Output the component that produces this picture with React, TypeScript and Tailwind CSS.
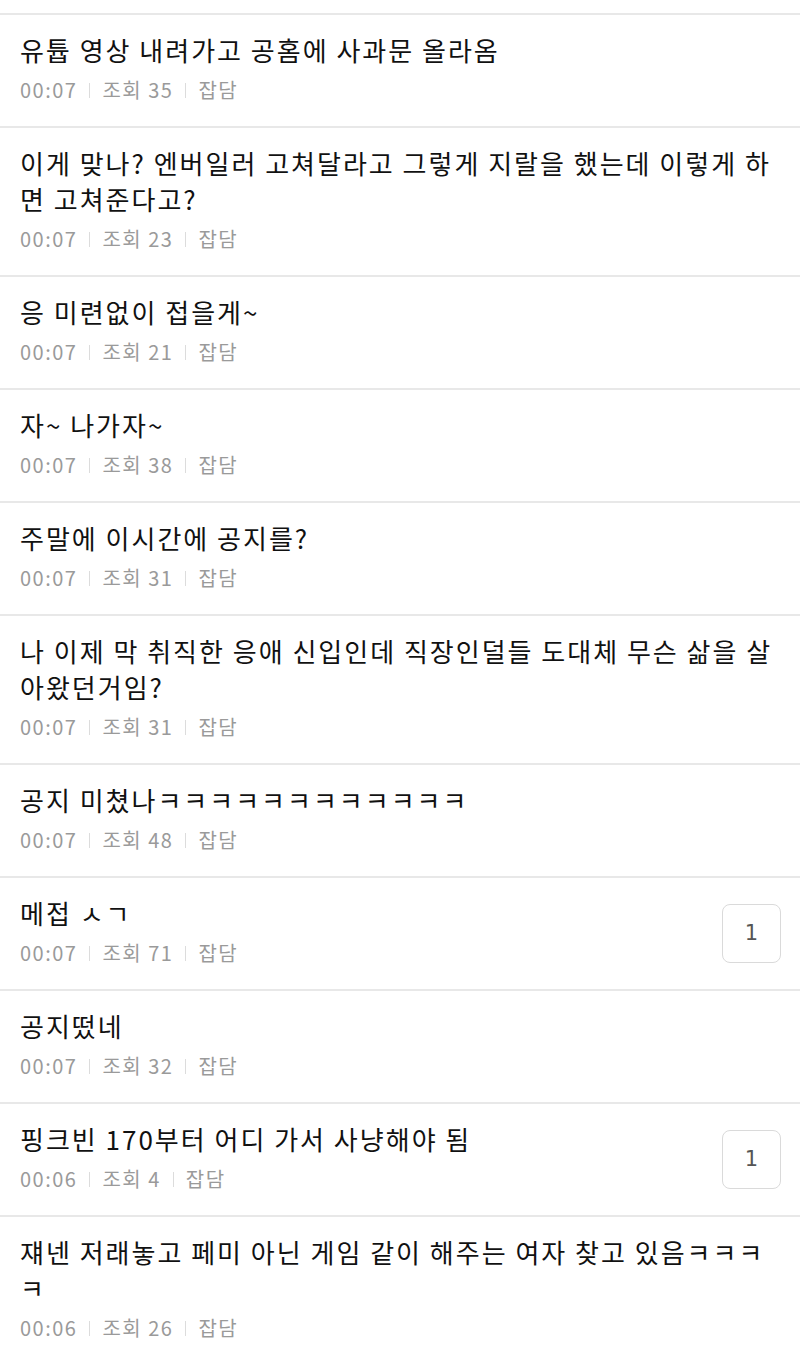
import React from "react";

type Post = { title: string; time: string; views: number; cat: string; comments?: number };

const posts: Post[] = [
  { title: "유튭 영상 내려가고 공홈에 사과문 올라옴", time: "00:07", views: 35, cat: "잡담" },
  { title: "이게 맞나? 엔버일러 고쳐달라고 그렇게 지랄을 했는데 이렇게 하면 고쳐준다고?", time: "00:07", views: 23, cat: "잡담" },
  { title: "응 미련없이 접을게~", time: "00:07", views: 21, cat: "잡담" },
  { title: "자~ 나가자~", time: "00:07", views: 38, cat: "잡담" },
  { title: "주말에 이시간에 공지를?", time: "00:07", views: 31, cat: "잡담" },
  { title: "나 이제 막 취직한 응애 신입인데 직장인덜들 도대체 무슨 삶을 살아왔던거임?", time: "00:07", views: 31, cat: "잡담" },
  { title: "공지 미쳤나ㅋㅋㅋㅋㅋㅋㅋㅋㅋㅋㅋㅋ", time: "00:07", views: 48, cat: "잡담" },
  { title: "메접 ㅅㄱ", time: "00:07", views: 71, cat: "잡담", comments: 1 },
  { title: "공지떴네", time: "00:07", views: 32, cat: "잡담" },
  { title: "핑크빈 170부터 어디 가서 사냥해야 됨", time: "00:06", views: 4, cat: "잡담", comments: 1 },
  { title: "쟤넨 저래놓고 페미 아닌 게임 같이 해주는 여자 찾고 있음ㅋㅋㅋㅋ", time: "00:06", views: 26, cat: "잡담" },
];

function Sep() {
  return <span className="mx-[12px] inline-block h-[15px] w-px bg-[#dcdcdc]" />;
}

export default function App() {
  return (
    <div
      className="min-h-[1353px] bg-white pt-[13px]"
      style={{ fontFamily: '"Noto Sans CJK KR", "Noto Sans", sans-serif' }}
    >
      <ul className="border-t-2 border-[#e8e8e8]">
        {posts.map((p, i) => (
          <li key={i} className="flex items-center border-b-2 border-[#e8e8e8] pl-[20px] pr-[19px]">
            <div className="min-w-0 flex-1 pt-[17px] pb-[23px]">
              <div className="break-all text-[26px] leading-[36px] tracking-[2px] text-[#111]">{p.title}</div>
              <div className="mt-[9px] flex items-center text-[20px] leading-[26px] tracking-[1.5px] text-[#9a9a9a]">
                <span>{p.time}</span>
                <Sep />
                <span>조회 {p.views}</span>
                <Sep />
                <span>{p.cat}</span>
              </div>
            </div>
            {p.comments !== undefined && (
              <div
                className="ml-4 flex h-[59px] w-[59px] shrink-0 items-center justify-center rounded-[8px] border border-[#dadada] text-[21px] text-[#555]"
                style={{ fontFamily: '"DejaVu Sans", sans-serif' }}
              >
                {p.comments}
              </div>
            )}
          </li>
        ))}
      </ul>
    </div>
  );
}
